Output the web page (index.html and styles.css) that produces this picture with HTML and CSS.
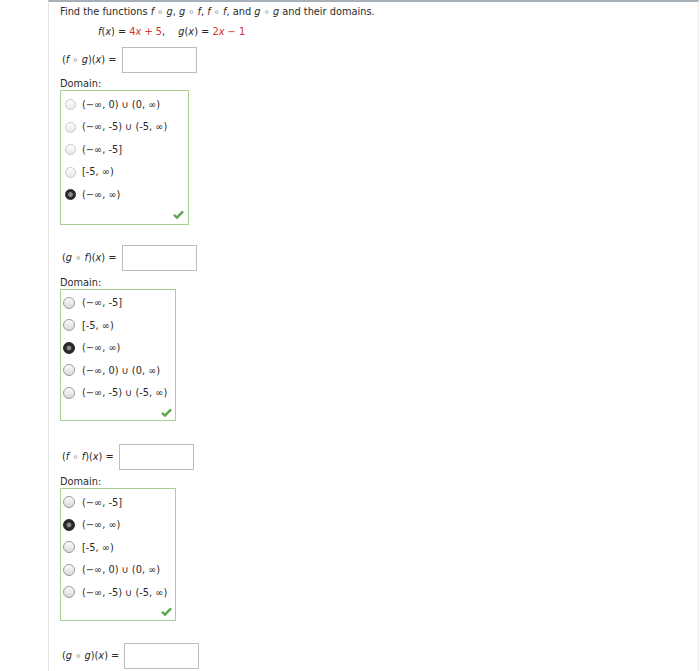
FILE: index.html
```html
<!DOCTYPE html>
<html>
<head>
<meta charset="utf-8">
<link rel="stylesheet" href="styles.css">
</head>
<body>
<div class="page">
  <div class="title">Find the functions <i>f</i> <span class="op">∘</span> <i>g</i>, <i>g</i> <span class="op">∘</span> <i>f</i>, <i>f</i> <span class="op">∘</span> <i>f</i>, and <i>g</i> <span class="op">∘</span> <i>g</i> and their domains.</div>
  <div class="formula"><i>f</i>(<i>x</i>) = <span class="red">4<i>x</i> + 5</span>, <span class="sp"></span><i>g</i>(<i>x</i>) = <span class="red">2<i>x</i> − 1</span></div>

  <div class="answer a1"><span class="label">(<i>f</i> <span class="op">∘</span> <i>g</i>)(<i>x</i>) =</span><span class="input"></span></div>
  <div class="domain">Domain:</div>
  <div class="box box1">
    <div class="opt"><span class="radio faint"></span>(−∞, 0) ∪ (0, ∞)</div>
    <div class="opt"><span class="radio faint"></span>(−∞, -5) ∪ (-5, ∞)</div>
    <div class="opt"><span class="radio faint"></span>(−∞, -5]</div>
    <div class="opt"><span class="radio faint"></span>[-5, ∞)</div>
    <div class="opt"><span class="radio on"></span>(−∞, ∞)</div>
    <div class="check c1"><svg width="11" height="9" viewBox="0 0 11 9"><path d="M1 4.8 L4 7.6 L10 1.4" fill="none" stroke="#5aa64a" stroke-width="2.4"/></svg></div>
  </div>

  <div class="answer a2"><span class="label">(<i>g</i> <span class="op">∘</span> <i>f</i>)(<i>x</i>) =</span><span class="input"></span></div>
  <div class="domain d2">Domain:</div>
  <div class="box box2">
    <div class="opt"><span class="radio"></span>(−∞, -5]</div>
    <div class="opt"><span class="radio"></span>[-5, ∞)</div>
    <div class="opt"><span class="radio on"></span>(−∞, ∞)</div>
    <div class="opt"><span class="radio"></span>(−∞, 0) ∪ (0, ∞)</div>
    <div class="opt"><span class="radio"></span>(−∞, -5) ∪ (-5, ∞)</div>
    <div class="check"><svg width="11" height="9" viewBox="0 0 11 9"><path d="M1 4.8 L4 7.6 L10 1.4" fill="none" stroke="#5aa64a" stroke-width="2.4"/></svg></div>
  </div>

  <div class="answer a3"><span class="label">(<i>f</i> <span class="op">∘</span> <i>f</i>)(<i>x</i>) =</span><span class="input"></span></div>
  <div class="domain d2">Domain:</div>
  <div class="box box2">
    <div class="opt"><span class="radio"></span>(−∞, -5]</div>
    <div class="opt"><span class="radio on"></span>(−∞, ∞)</div>
    <div class="opt"><span class="radio"></span>[-5, ∞)</div>
    <div class="opt"><span class="radio"></span>(−∞, 0) ∪ (0, ∞)</div>
    <div class="opt"><span class="radio"></span>(−∞, -5) ∪ (-5, ∞)</div>
    <div class="check"><svg width="11" height="9" viewBox="0 0 11 9"><path d="M1 4.8 L4 7.6 L10 1.4" fill="none" stroke="#5aa64a" stroke-width="2.4"/></svg></div>
  </div>

  <div class="answer a4"><span class="label">(<i>g</i> <span class="op">∘</span> <i>g</i>)(<i>x</i>) =</span><span class="input"></span></div>
</div>
</body>
</html>
```
FILE: styles.css
```css
html, body {
  margin: 0;
  padding: 0;
  background: #fff;
}
body {
  font-family: "DejaVu Sans", Verdana, sans-serif;
  font-size: 9.8px;
  color: #2a2a2a;
  overflow: hidden;
}
.page {
  margin-left: 48px;
  width: 638px;
  height: 700px;
  border-left: 1px solid #e4e4e4;
  border-right: 1px solid #ececec;
  border-top: 2px solid #a7b0b9;
  padding-left: 11px;
}
.title {
  margin-top: 3px;
  line-height: 14px;
}
.formula {
  margin-top: 6px;
  line-height: 14px;
  padding-left: 38px;
}
.sp { display: inline-block; width: 10px; }
.red { color: #d0342c; }
.op { color: #8a8a8a; }
.answer {
  display: flex;
  align-items: center;
  gap: 5px;
  padding-left: 2px;
}
.a1 { margin-top: 8px; }
.a2 { margin-top: 20px; }
.a3 { margin-top: 23px; }
.a4 { margin-top: 22px; }
.label { line-height: 14px; }
.input {
  display: block;
  width: 73px;
  height: 24px;
  border: 1px solid #bdbdbd;
  background: #fff;
}
.domain {
  margin-top: 4px;
  line-height: 13px;
}
.d2 { margin-top: 5px; }
.box {
  border: 1px solid #a9cf92;
  padding-top: 2px;
  box-sizing: border-box;
}
.box1 { width: 129px; }
.box2 { width: 116px; }
.opt {
  height: 22.5px;
  display: flex;
  align-items: center;
  padding-left: 21px;
  position: relative;
  white-space: nowrap;
}
.radio {
  position: absolute;
  left: 2px;
  top: 50%;
  width: 10px;
  height: 10px;
  margin-top: -6px;
  border-radius: 50%;
  border: 1px solid #9a9a9a;
  background: linear-gradient(#fdfdfd, #d8d8d8);
}
.box1 .radio { left: 4px; width: 9px; height: 9px; margin-top: -5px; }
.radio.faint {
  border-color: #c8c8c8;
  background: linear-gradient(#ffffff, #e8e8e8);
}
.radio.on {
  border-color: #222;
  background: radial-gradient(circle, #8a8a8a 0, #8a8a8a 2px, #2a2a2a 2.8px, #2a2a2a 100%);
}
.check {
  height: 16px;
  display: flex;
  justify-content: flex-end;
  align-items: center;
  padding-right: 3px;
}
.check.c1 { height: 18px; padding-right: 4px; }
.check svg { display: block; }
```
